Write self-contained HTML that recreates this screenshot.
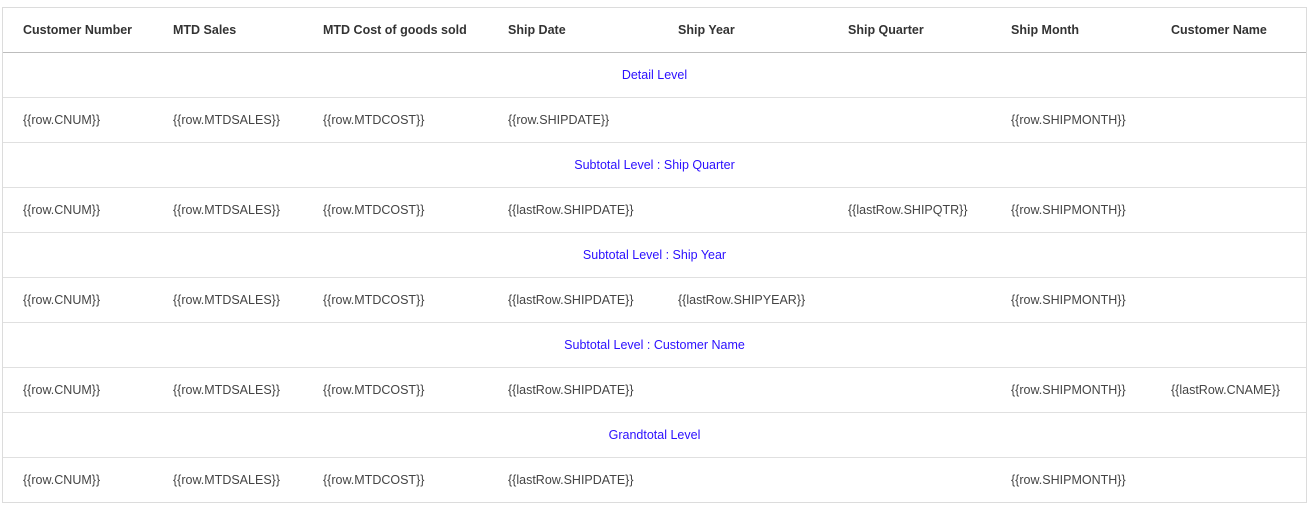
<!DOCTYPE html>
<html><head><style>
body{margin:0;background:#fff;font-family:"Liberation Sans",sans-serif;font-size:12.5px;color:#444;}
.t{position:absolute;left:2px;top:7px;width:1303px;height:494px;border:1px solid #dcdcdc;}
.r{position:absolute;left:0;width:1303px;height:45px;border-bottom:1px solid #e0e0e0;box-sizing:border-box;}
.h{border-bottom:1px solid #bdbdbd;color:#333;font-weight:bold;}
.c{position:absolute;top:0;line-height:44px;white-space:nowrap;}
.b{width:100%;text-align:center;color:#2b0fff;line-height:44px;}
</style></head><body>
<div class="t">
<div class="r h" style="top:0"><span class="c" style="left:20px">Customer Number</span><span class="c" style="left:170px">MTD Sales</span><span class="c" style="left:320px">MTD Cost of goods sold</span><span class="c" style="left:505px">Ship Date</span><span class="c" style="left:675px">Ship Year</span><span class="c" style="left:845px">Ship Quarter</span><span class="c" style="left:1008px">Ship Month</span><span class="c" style="left:1168px">Customer Name</span></div>
<div class="r" style="top:45px"><div class="b">Detail Level</div></div>
<div class="r" style="top:90px"><span class="c" style="left:20px">{{row.CNUM}}</span><span class="c" style="left:170px">{{row.MTDSALES}}</span><span class="c" style="left:320px">{{row.MTDCOST}}</span><span class="c" style="left:505px">{{row.SHIPDATE}}</span><span class="c" style="left:1008px">{{row.SHIPMONTH}}</span></div>
<div class="r" style="top:135px"><div class="b">Subtotal Level : Ship Quarter</div></div>
<div class="r" style="top:180px"><span class="c" style="left:20px">{{row.CNUM}}</span><span class="c" style="left:170px">{{row.MTDSALES}}</span><span class="c" style="left:320px">{{row.MTDCOST}}</span><span class="c" style="left:505px">{{lastRow.SHIPDATE}}</span><span class="c" style="left:845px">{{lastRow.SHIPQTR}}</span><span class="c" style="left:1008px">{{row.SHIPMONTH}}</span></div>
<div class="r" style="top:225px"><div class="b">Subtotal Level : Ship Year</div></div>
<div class="r" style="top:270px"><span class="c" style="left:20px">{{row.CNUM}}</span><span class="c" style="left:170px">{{row.MTDSALES}}</span><span class="c" style="left:320px">{{row.MTDCOST}}</span><span class="c" style="left:505px">{{lastRow.SHIPDATE}}</span><span class="c" style="left:675px">{{lastRow.SHIPYEAR}}</span><span class="c" style="left:1008px">{{row.SHIPMONTH}}</span></div>
<div class="r" style="top:315px"><div class="b">Subtotal Level : Customer Name</div></div>
<div class="r" style="top:360px"><span class="c" style="left:20px">{{row.CNUM}}</span><span class="c" style="left:170px">{{row.MTDSALES}}</span><span class="c" style="left:320px">{{row.MTDCOST}}</span><span class="c" style="left:505px">{{lastRow.SHIPDATE}}</span><span class="c" style="left:1008px">{{row.SHIPMONTH}}</span><span class="c" style="left:1168px">{{lastRow.CNAME}}</span></div>
<div class="r" style="top:405px"><div class="b">Grandtotal Level</div></div>
<div class="r" style="top:450px;border-bottom:none"><span class="c" style="left:20px">{{row.CNUM}}</span><span class="c" style="left:170px">{{row.MTDSALES}}</span><span class="c" style="left:320px">{{row.MTDCOST}}</span><span class="c" style="left:505px">{{lastRow.SHIPDATE}}</span><span class="c" style="left:1008px">{{row.SHIPMONTH}}</span></div>
</div>
</body></html>
